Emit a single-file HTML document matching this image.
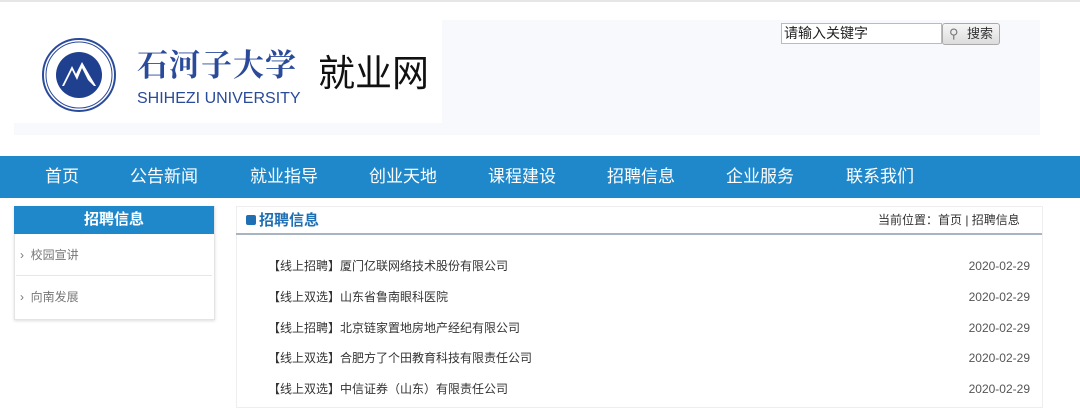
<!DOCTYPE html>
<html><head><meta charset="utf-8"><style>
body{margin:0;width:1080px;height:401px;overflow:hidden;background:#fff;font-family:"Liberation Sans","Noto Sans CJK SC",sans-serif;position:relative}
.a{position:absolute}
.nav span{position:absolute;top:0;line-height:42px;color:#fff;font-size:17px;transform:translateX(-50%);white-space:nowrap}
.row{position:absolute;left:268px;width:762px;font-size:12px;color:#333;height:16px;line-height:16px}
.row b{font-weight:normal;position:absolute;right:0;color:#555}
</style></head><body>
<div class="a" style="left:0;top:0;width:1080px;height:2px;background:#e4e6e8"></div>
<div class="a" style="left:14px;top:20px;width:1026px;height:115px;background:#f7f9fc"></div>
<div class="a" style="left:14px;top:20px;width:428px;height:103px;background:#fff"></div>
<svg class="a" style="left:40px;top:36px" width="78" height="78" viewBox="0 0 78 78">
<circle cx="39" cy="39" r="36" fill="#fff" stroke="#2a4a9a" stroke-width="2"/>
<circle cx="39" cy="39" r="33" fill="none" stroke="#2a4a9a" stroke-width="1"/>
<circle cx="39" cy="39" r="23" fill="#1f3f8f"/>
<path d="M22 50 L32 30 L36 38 L42 26 L50 40 L56 50 Z" fill="#fff"/>
<path d="M24 50 L32 34 L37 44 L42 32 L48 44 L54 50Z" fill="#1f3f8f"/>
</svg>
<div class="a" style="left:137px;top:42px;font-size:31px;font-weight:bold;color:#2a4a9a;font-family:'Noto Serif CJK SC',serif;letter-spacing:1px;line-height:42px">石河子大学</div>
<div class="a" style="left:137px;top:90px;font-size:16px;color:#2a4a9a;line-height:18px">SHIHEZI UNIVERSITY</div>
<div class="a" style="left:318px;top:51px;font-size:37px;color:#111;line-height:46px">就业网</div>
<div class="a" style="left:781px;top:23px;width:157px;height:19px;border:1px solid #bbb;background:#fff;font-size:14px;line-height:19px;padding-left:2px;color:#222">请输入关键字</div>
<div class="a" style="left:942px;top:23px;width:56px;height:20px;border:1px solid #aaa;border-radius:3px;background:linear-gradient(#f6f6f6,#dcdcdc);font-size:13px;line-height:20px;text-align:right;color:#333"><span style="position:absolute;left:6px;top:0;color:#777">&#9906;</span><span style="margin-right:6px">搜索</span></div>
<div class="a nav" style="left:0;top:156px;width:1080px;height:42px;background:#1f88cb">
<span style="left:62px">首页</span><span style="left:164px">公告新闻</span><span style="left:284px">就业指导</span><span style="left:403px">创业天地</span><span style="left:522px">课程建设</span><span style="left:641px">招聘信息</span><span style="left:760px">企业服务</span><span style="left:880px">联系我们</span></div>
<div class="a" style="left:14px;top:206px;width:199px;height:112px;border:1px solid #e4e4e4;box-shadow:0 1px 3px #ddd"></div>
<div class="a" style="left:14px;top:206px;width:200px;height:28px;background:#1f88cb;color:#fff;font-weight:bold;font-size:15px;text-align:center;line-height:28px">招聘信息</div>
<div class="a" style="left:20px;top:247px;font-size:12px;color:#777;line-height:16px">›&nbsp; 校园宣讲</div>
<div class="a" style="left:16px;top:275px;width:196px;height:1px;background:#e6e6e6"></div>
<div class="a" style="left:20px;top:289px;font-size:12px;color:#777;line-height:16px">›&nbsp; 向南发展</div>
<div class="a" style="left:236px;top:206px;width:805px;height:200px;border:1px solid #eee"></div>
<div class="a" style="left:236px;top:233px;width:806px;height:2px;background:#a9b4c2"></div>
<div class="a" style="left:246px;top:212px;font-size:15px;color:#1f6fb4;font-weight:bold;line-height:18px"><span style="display:inline-block;width:10px;height:10px;background:#1f6fb4;border-radius:2px;margin-right:3px;vertical-align:0"></span>招聘信息</div>
<div class="a" style="left:878px;top:212px;font-size:12px;color:#333;line-height:16px">当前位置：首页 | 招聘信息</div>
<div class="row" style="top:258px">【线上招聘】厦门亿联网络技术股份有限公司<b>2020-02-29</b></div>
<div class="row" style="top:289px">【线上双选】山东省鲁南眼科医院<b>2020-02-29</b></div>
<div class="row" style="top:320px">【线上招聘】北京链家置地房地产经纪有限公司<b>2020-02-29</b></div>
<div class="row" style="top:350px">【线上双选】合肥方了个田教育科技有限责任公司<b>2020-02-29</b></div>
<div class="row" style="top:381px">【线上双选】中信证券（山东）有限责任公司<b>2020-02-29</b></div>
</body></html>
